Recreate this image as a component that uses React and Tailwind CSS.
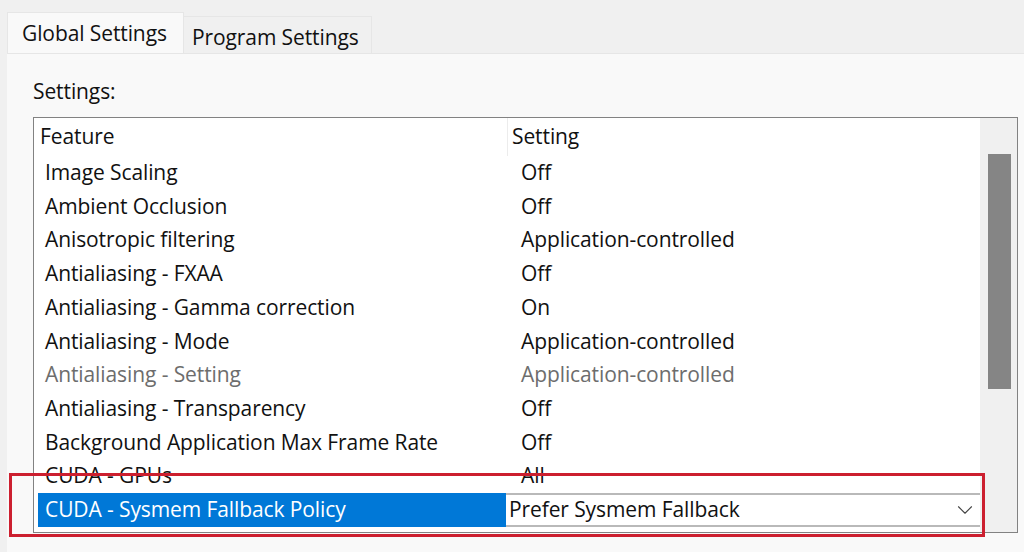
import { ChevronDown } from "lucide-react";

const rows = [
  { feature: "Image Scaling", setting: "Off" },
  { feature: "Ambient Occlusion", setting: "Off" },
  { feature: "Anisotropic filtering", setting: "Application-controlled" },
  { feature: "Antialiasing - FXAA", setting: "Off" },
  { feature: "Antialiasing - Gamma correction", setting: "On" },
  { feature: "Antialiasing - Mode", setting: "Application-controlled" },
  { feature: "Antialiasing - Setting", setting: "Application-controlled", disabled: true },
  { feature: "Antialiasing - Transparency", setting: "Off" },
  { feature: "Background Application Max Frame Rate", setting: "Off" },
  { feature: "CUDA - GPUs", setting: "All" },
];

const SettingRow = ({ feature, setting, disabled }) => (
  <div className={`flex h-[33.7px] items-center ${disabled ? "text-[#6d6d6d]" : "text-[#111]"}`}>
    <div className="w-[473px] pl-[11px] whitespace-nowrap">{feature}</div>
    <div className="pl-[14px] whitespace-nowrap">{setting}</div>
  </div>
);

const App = () => {
  return (
    <div className="relative h-[552px] w-[1024px] overflow-hidden bg-[#f0f0f0] text-[21px] font-['Open_Sans',sans-serif] tracking-[-0.1px]">
      {/* tab strip */}
      <div className="flex items-end pl-[7px] pt-[12px]">
        <div className="h-[41px] w-[177px] border-x border-t border-[#e6e6e6] bg-[#f9f9f9] pl-[14px] pt-[5px] text-[#111]">
          Global Settings
        </div>
        <div className="h-[37px] w-[188px] border-r border-t border-[#e6e6e6] bg-[#f0f0f0] pl-[8px] pt-[5px] text-[#111]">
          Program Settings
        </div>
      </div>

      {/* panel */}
      <div className="ml-[7px] h-full border-t border-[#e6e6e6] bg-[#f9f9f9] pl-[26px] pt-[23px]">
        <div className="h-[28px] leading-[28px] text-[#111]">Settings:</div>
        <div className="mt-[12px] flex h-[416px] w-[985px] border border-[#828282] bg-white">
          <div className="flex-1">
            <div className="flex h-[38px] items-center text-[#111]">
              <div className="w-[473px] pl-[6px]">Feature</div>
              <div className="h-full w-px bg-[#ececec]" />
              <div className="pl-[4px]">Setting</div>
            </div>
            {rows.map((r) => (
              <SettingRow key={r.feature} {...r} />
            ))}
            <div className="flex h-[33.7px] items-stretch">
              <div className="ml-[4px] flex w-[468px] items-center bg-[#0078d7] pl-[7px] text-white whitespace-nowrap">
                CUDA - Sysmem Fallback Policy
              </div>
              <div className="flex flex-1 items-center justify-between border-y-2 border-[#b9b9b9] bg-white pl-[3px] pr-[2px] text-[#111]">
                <span>Prefer Sysmem Fallback</span>
                <ChevronDown size={26} strokeWidth={1} className="text-[#444]" />
              </div>
            </div>
          </div>
          {/* scrollbar */}
          <div className="w-[37px] bg-[#f0f0f0] pl-[8px] pr-[6px] pt-[36px]">
            <div className="h-[235px] bg-[#858585]" />
          </div>
        </div>
      </div>

      {/* red highlight */}
      <div className="absolute left-[9px] top-[473px] h-[64px] w-[976px] border-[3px] border-[#cc1f2f]" />
    </div>
  );
};

export default App;
